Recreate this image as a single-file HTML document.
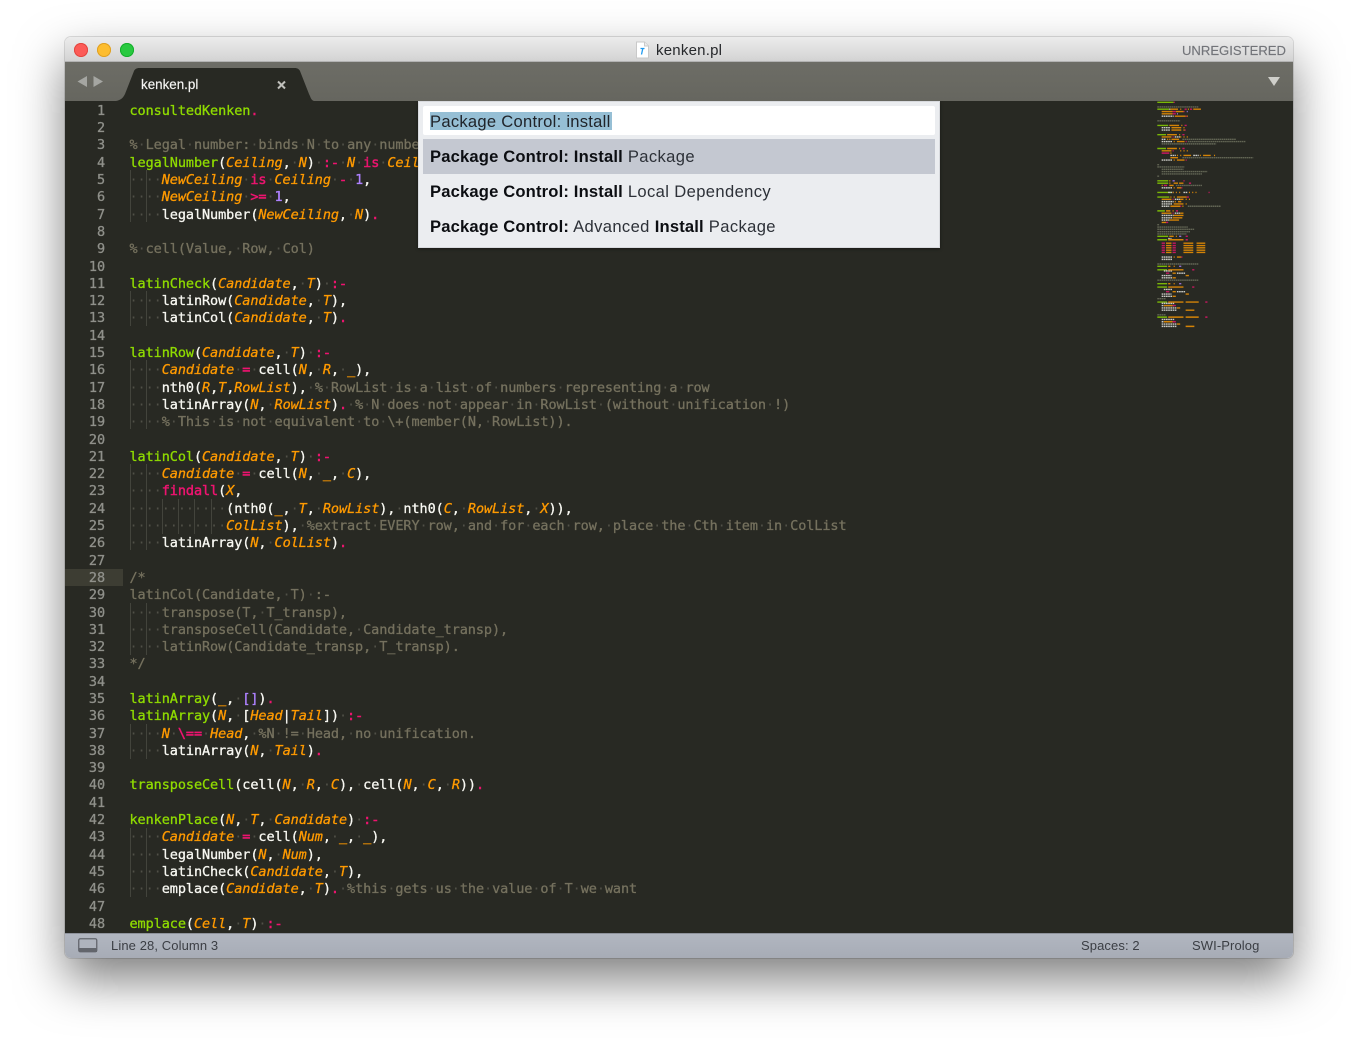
<!DOCTYPE html>
<html lang="en"><head><meta charset="utf-8"><title>kenken.pl</title>
<style>
html,body{margin:0;padding:0;background:#fff;width:1358px;height:1050px;overflow:hidden}
#win{position:absolute;left:65px;top:37px;width:1228px;height:921px;border-radius:6px;overflow:hidden;box-shadow:0 22px 48px rgba(0,0,0,.5),0 0 0 1px rgba(0,0,0,.12)}
.abs,#title,#tabs,#ed,#status{position:absolute}
#title{left:0;top:0;width:1228px;height:25px;background:linear-gradient(#ececec,#d3d3d3);border-bottom:1px solid #b3b3b3;box-sizing:border-box}
#tabs{left:0;top:25px;width:1228px;height:39px;background:linear-gradient(#6d6d66,#66665f)}
#ed{left:0;top:64px;width:1228px;height:832px;background:#282923;overflow:hidden}
#status{left:0;top:896px;width:1228px;height:25px;background:linear-gradient(#b1b6c0,#a7acb6);border-top:1px solid #8e929b;box-sizing:border-box;font:13px "Liberation Sans",sans-serif;letter-spacing:.1px;color:#3b3e44;line-height:24px}
.light{position:absolute;top:5.500px;width:14px;height:14px;border-radius:50%}
#code,#nums{position:absolute;top:1.9px;font:13.5px/17.3px "DejaVu Sans Mono","Liberation Mono",monospace;letter-spacing:-.073px;-webkit-text-stroke:.3px}
#code div,#nums div{height:17.3px;white-space:pre}
#nums{left:0;width:40px;text-align:right;color:#8f908a}
#code{left:64.5px;color:#f8f8f2}
a{color:#8fdb00}em{color:#ff9a00;font-style:italic}s{color:#ee1470;text-decoration:none;-webkit-text-stroke:.45px}
u{color:#505047;text-decoration:none;font-style:normal;-webkit-text-stroke:0}
.c{color:#75715e}.n{color:#ae81ff}
.g{position:absolute;width:1px;background:#43443c}
#pal{position:absolute;left:353px;top:0;width:522px;height:147px;box-sizing:border-box;background:#ebedf0;box-shadow:inset 0 0 0 1px #d8dade,0 1px 3px rgba(0,0,0,.4);font:16.6px "Liberation Sans",sans-serif;letter-spacing:.36px;color:#2d3138}
#pal .inp{position:absolute;left:5px;top:5px;width:512px;height:29px;background:#fff;border-radius:2px}
#pal .sel{position:absolute;left:7px;top:6px;height:18px;line-height:19px;background:#96bfd5;padding:0 1px 0 0;color:#20242a;white-space:pre;letter-spacing:.26px}
#pal .it{position:absolute;left:5px;width:512px;height:35px;line-height:35px;padding-left:7px;box-sizing:border-box;white-space:pre}
#pal b{color:#0c0e12;letter-spacing:.16px}
</style></head>
<body>
<div id="win">
 <div id="title">
  <div class="light" style="left:9px;background:#fc5b57;box-shadow:inset 0 0 0 1px #e2463f"></div>
  <div class="light" style="left:32px;background:#fdbd2f;box-shadow:inset 0 0 0 1px #dfa023"></div>
  <div class="light" style="left:55px;background:#29c940;box-shadow:inset 0 0 0 1px #14ae2b"></div>
  <svg class="abs" style="left:570px;top:4px" width="15" height="18" viewBox="0 0 15 18"><path d="M1.500 1h8l4 4v12h-12z" fill="#fff" stroke="#c9c9c9"/><path d="M9.500 1v4h4" fill="#ececec" stroke="#c9c9c9"/><path d="M5.500 7.500h4M7.800 7.500l-1.300 6" fill="none" stroke="#1e9af0" stroke-width="1.300"/></svg>
  <div class="abs" style="left:591px;top:4.500px;font:15px/18px 'Liberation Sans',sans-serif;letter-spacing:.22px;color:#26282b">kenken.pl</div>
  <div class="abs" style="right:7px;top:4.500px;font:13.1px/18px 'Liberation Sans',sans-serif;color:#73757a;-webkit-text-stroke:.15px">UNREGISTERED</div>
 </div>
 <div id="tabs">
  <svg class="abs" style="left:0;top:0" width="1228" height="39" viewBox="0 0 1228 39">
   <path d="M22 14l-9.500 5.500 9.500 5.500zM28.500 14l9.500 5.500-9.500 5.500z" fill="#a5a6a2"/>
   <path d="M51 39C56 38 58 36 60 32L69 9C70 7 72 6 74 6H230C232 6 234 7 235 9L244 32C246 36 246 38 249 39z" fill="#282923"/>
   <path d="M1203 15h12l-6 9z" fill="#cfcfca"/>
   <path d="M213 19.500l7 7M220 19.500l-7 7" stroke="#c0c0bb" stroke-width="2"/>
  </svg>
  <div class="abs" style="left:76px;top:14px;font:13.4px/18px 'Liberation Sans',sans-serif;color:#f6f6f4;-webkit-text-stroke:.15px">kenken.pl</div>
 </div>
 <div id="ed">
  <div class="abs" style="left:0;top:467.500px;width:58px;height:17.300px;background:#3d3d33"></div>
  <div class="g" style="left:65px;top:69px;height:52px"></div><div class="g" style="left:81px;top:69px;height:52px"></div>
  <div class="g" style="left:65px;top:190px;height:35px"></div><div class="g" style="left:81px;top:190px;height:35px"></div>
  <div class="g" style="left:65px;top:259px;height:69px"></div><div class="g" style="left:81px;top:259px;height:69px"></div>
  <div class="g" style="left:65px;top:363px;height:86px"></div><div class="g" style="left:81px;top:363px;height:86px"></div>
  <div class="g" style="left:97px;top:398px;height:35px"></div><div class="g" style="left:113px;top:398px;height:35px"></div><div class="g" style="left:129px;top:398px;height:35px"></div><div class="g" style="left:146px;top:398px;height:35px"></div>
  <div class="g" style="left:65px;top:502px;height:52px"></div><div class="g" style="left:81px;top:502px;height:52px"></div>
  <div class="g" style="left:65px;top:623px;height:35px"></div><div class="g" style="left:81px;top:623px;height:35px"></div>
  <div class="g" style="left:65px;top:727px;height:69px"></div><div class="g" style="left:81px;top:727px;height:69px"></div>
  <div id="nums"><div>1</div><div>2</div><div>3</div><div>4</div><div>5</div><div>6</div><div>7</div><div>8</div><div>9</div><div>10</div><div>11</div><div>12</div><div>13</div><div>14</div><div>15</div><div>16</div><div>17</div><div>18</div><div>19</div><div>20</div><div>21</div><div>22</div><div>23</div><div>24</div><div>25</div><div>26</div><div>27</div><div>28</div><div>29</div><div>30</div><div>31</div><div>32</div><div>33</div><div>34</div><div>35</div><div>36</div><div>37</div><div>38</div><div>39</div><div>40</div><div>41</div><div>42</div><div>43</div><div>44</div><div>45</div><div>46</div><div>47</div><div>48</div></div>
  <div id="code">
<div><a>consultedKenken</a><s>.</s></div>
<div></div>
<div class="c">%<u>·</u>Legal<u>·</u>number:<u>·</u>binds<u>·</u>N<u>·</u>to<u>·</u>any<u>·</u>number</div>
<div><a>legalNumber</a>(<em>Ceiling</em>,<u>·</u><em>N</em>)<u>·</u><s>:-</s><u>·</u><em>N</em><u>·</u><s>is</s><u>·</u><em>Ceiling</em></div>
<div><u>····</u><em>NewCeiling</em><u>·</u><s>is</s><u>·</u><em>Ceiling</em><u>·</u><s>-</s><u>·</u><span class="n">1</span>,</div>
<div><u>····</u><em>NewCeiling</em><u>·</u><s>&gt;=</s><u>·</u><span class="n">1</span>,</div>
<div><u>····</u>legalNumber(<em>NewCeiling</em>,<u>·</u><em>N</em>)<s>.</s></div>
<div></div>
<div class="c">%<u>·</u>cell(Value,<u>·</u>Row,<u>·</u>Col)</div>
<div></div>
<div><a>latinCheck</a>(<em>Candidate</em>,<u>·</u><em>T</em>)<u>·</u><s>:-</s></div>
<div><u>····</u>latinRow(<em>Candidate</em>,<u>·</u><em>T</em>),</div>
<div><u>····</u>latinCol(<em>Candidate</em>,<u>·</u><em>T</em>)<s>.</s></div>
<div></div>
<div><a>latinRow</a>(<em>Candidate</em>,<u>·</u><em>T</em>)<u>·</u><s>:-</s></div>
<div><u>····</u><em>Candidate</em><u>·</u><s>=</s><u>·</u>cell(<em>N</em>,<u>·</u><em>R</em>,<u>·</u><em>_</em>),</div>
<div><u>····</u>nth0(<em>R</em>,<em>T</em>,<em>RowList</em>),<u>·</u><span class="c">%<u>·</u>RowList<u>·</u>is<u>·</u>a<u>·</u>list<u>·</u>of<u>·</u>numbers<u>·</u>representing<u>·</u>a<u>·</u>row</span></div>
<div><u>····</u>latinArray(<em>N</em>,<u>·</u><em>RowList</em>)<s>.</s><u>·</u><span class="c">%<u>·</u>N<u>·</u>does<u>·</u>not<u>·</u>appear<u>·</u>in<u>·</u>RowList<u>·</u>(without<u>·</u>unification<u>·</u>!)</span></div>
<div><u>····</u><span class="c">%<u>·</u>This<u>·</u>is<u>·</u>not<u>·</u>equivalent<u>·</u>to<u>·</u>\+(member(N,<u>·</u>RowList)).</span></div>
<div></div>
<div><a>latinCol</a>(<em>Candidate</em>,<u>·</u><em>T</em>)<u>·</u><s>:-</s></div>
<div><u>····</u><em>Candidate</em><u>·</u><s>=</s><u>·</u>cell(<em>N</em>,<u>·</u><em>_</em>,<u>·</u><em>C</em>),</div>
<div><u>····</u><s>findall</s>(<em>X</em>,</div>
<div><u>············</u>(nth0(<em>_</em>,<u>·</u><em>T</em>,<u>·</u><em>RowList</em>),<u>·</u>nth0(<em>C</em>,<u>·</u><em>RowList</em>,<u>·</u><em>X</em>)),</div>
<div><u>············</u><em>ColList</em>),<u>·</u><span class="c">%extract<u>·</u>EVERY<u>·</u>row,<u>·</u>and<u>·</u>for<u>·</u>each<u>·</u>row,<u>·</u>place<u>·</u>the<u>·</u>Cth<u>·</u>item<u>·</u>in<u>·</u>ColList</span></div>
<div><u>····</u>latinArray(<em>N</em>,<u>·</u><em>ColList</em>)<s>.</s></div>
<div></div>
<div class="c">/*</div>
<div class="c">latinCol(Candidate,<u>·</u>T)<u>·</u>:-</div>
<div class="c"><u>····</u>transpose(T,<u>·</u>T_transp),</div>
<div class="c"><u>····</u>transposeCell(Candidate,<u>·</u>Candidate_transp),</div>
<div class="c"><u>····</u>latinRow(Candidate_transp,<u>·</u>T_transp).</div>
<div class="c">*/</div>
<div></div>
<div><a>latinArray</a>(<em>_</em>,<u>·</u><span class="n">[]</span>)<s>.</s></div>
<div><a>latinArray</a>(<em>N</em>,<u>·</u>[<em>Head</em>|<em>Tail</em>])<u>·</u><s>:-</s></div>
<div><u>····</u><em>N</em><u>·</u><s>\==</s><u>·</u><em>Head</em>,<u>·</u><span class="c">%N<u>·</u>!=<u>·</u>Head,<u>·</u>no<u>·</u>unification.</span></div>
<div><u>····</u>latinArray(<em>N</em>,<u>·</u><em>Tail</em>)<s>.</s></div>
<div></div>
<div><a>transposeCell</a>(cell(<em>N</em>,<u>·</u><em>R</em>,<u>·</u><em>C</em>),<u>·</u>cell(<em>N</em>,<u>·</u><em>C</em>,<u>·</u><em>R</em>))<s>.</s></div>
<div></div>
<div><a>kenkenPlace</a>(<em>N</em>,<u>·</u><em>T</em>,<u>·</u><em>Candidate</em>)<u>·</u><s>:-</s></div>
<div><u>····</u><em>Candidate</em><u>·</u><s>=</s><u>·</u>cell(<em>Num</em>,<u>·</u><em>_</em>,<u>·</u><em>_</em>),</div>
<div><u>····</u>legalNumber(<em>N</em>,<u>·</u><em>Num</em>),</div>
<div><u>····</u>latinCheck(<em>Candidate</em>,<u>·</u><em>T</em>),</div>
<div><u>····</u>emplace(<em>Candidate</em>,<u>·</u><em>T</em>)<s>.</s><u>·</u><span class="c">%this<u>·</u>gets<u>·</u>us<u>·</u>the<u>·</u>value<u>·</u>of<u>·</u>T<u>·</u>we<u>·</u>want</span></div>
<div></div>
<div><a>emplace</a>(<em>Cell</em>,<u>·</u><em>T</em>)<u>·</u><s>:-</s></div>
  </div>
  <svg class="abs" style="left:1092px;top:0;opacity:.8;filter:blur(.3px)" width="110" height="232" viewBox="0 0 110 232" fill="none">
   <g transform="translate(.3,1.300) scale(1.09,2.31)" stroke-width=".6">
    <path stroke="#8a8d76" stroke-dasharray="1.500 .4" opacity=".75" d="M0 2h38M0 8h21M23 16h49M28 17h53M4 18h50M23 24h65M0 27h2M0 28h25M4 29h20M4 30h42M4 31h37M0 32h2M17 36h24M28 45h30M0 53h2M0 54h28M0 55h34M0 56h30M0 57h27M0 70h38M0 77h38M0 85h8M0 92h8"/>
    <path stroke="#8fdb00" d="M0 0h15M0 3h11M0 10h10M0 14h8M0 20h8M0 34h10M0 35h10M0 39h13M0 41h11M0 47h7M0 58h10M0 59.500h9M0 71h9M0 72.500h9M0 78.500h9M0 80h9M0 86.500h9M0 93h9"/>
    <path stroke="#f4f4ee" stroke-dasharray="1.500 .5" d="M11 3h1M4 6h11M4 11h8M4 12h8M16 15h5M4 16h4M4 17h10M4 25h10M12 23h5M33 23h5M4 37h10M10 39h5M24 39h4M16 42h5M4 43h11M4 44h10M4 45h7M4 48h4M16 48h5M4 49h11M4 50h10M4 51h7M10 59h3M4 67h10M4 68h10M6 73h8M18 74h8M4 75h9M4 76h10M6 81h8M18 82h8M4 83h9M4 84h10M4 87h12M4 88h12M4 89h14M4 90h14M4 94h12M4 95h12M4 96h14M4 97h14"/>
    <path stroke="#ff9a00" d="M12 3h7M21 3h1M28 3h1M33 3h7M4 4h10M17 4h7M4 5h10M16 6h10M27 6h1M11 10h9M22 10h1M13 11h9M24 11h1M13 12h9M24 12h1M9 14h9M20 14h1M4 15h9M21 15h1M24 15h1M27 15h1M9 16h1M11 16h1M13 16h7M15 17h1M18 17h7M9 20h9M20 20h1M4 21h9M21 21h1M24 21h1M27 21h1M12 22h1M18 23h1M21 23h1M24 23h7M39 23h1M42 23h7M52 23h1M12 24h7M15 25h1M18 25h7M11 34h1M11 35h1M15 35h4M20 35h4M4 36h1M11 36h4M15 37h1M18 37h4M14 39h1M17 39h1M20 39h1M29 39h1M32 39h1M35 39h1M12 41h1M15 41h1M18 41h9M4 42h9M21 42h3M26 42h1M29 42h1M16 43h1M19 43h3M15 44h9M26 44h1M12 45h9M23 45h1M8 47h4M14 47h1M4 48h9M21 48h3M15 49h9M14 50h9M11 51h9M4 52h4M11 58h4M17 58h1M10 59.500h14M8 61h5M8 62h5M8 63h5M8 64h5M8 65h5M24 61h9M24 62h9M24 63h9M24 64h9M24 65h9M36 61h8M36 62h8M36 63h8M36 64h8M36 65h8M15 67h1M18 67h4M10 71h2M15 71h1M10 72.500h14M14 74h3M26 75h3M14 76h3M10 78.500h2M15 78.500h1M10 80h14M14 82h3M26 83h3M14 84h3M10 86.500h14M26 86.500h12M6 88h8M18 89h3M26 90h8M10 93h14M26 93h12M6 95h8M18 96h3M26 97h8"/>
    <path stroke="#ee1470" d="M15 0h1M25 3h2M30 3h2M14 4h3M24 4h1M14 5h3M26 6h1M25 10h2M25 12h1M23 14h2M14 15h1M26 17h1M23 20h2M14 21h1M4 22h7M26 25h1M24 34h1M29 35h2M6 36h3M22 37h1M47 39h1M27 41h2M14 42h1M21 45h1M17 47h2M14 48h1M8 52h2M26 58h2M26 59.500h2M4 61h3M4 62h3M4 63h3M4 64h3M4 65h3M14 61h3M14 62h3M14 63h3M14 64h3M14 65h3M22 67h1M32 72.500h2M8 74h3M32 80h2M8 82h3M44 86.500h2M14 88h3M44 93h2M14 95h3"/>
    <path stroke="#ae81ff" d="M27 4h1M18 5h1M14 34h2M20 58h2M20 71h2M20 78.500h2"/>
   </g>
  </svg>
  <div id="pal">
   <div class="inp"><div class="sel">Package Control: install</div></div>
   <div class="it" style="top:38px;background:#c4c8d1;line-height:36px"><b>Package Control: Install</b> Package</div>
   <div class="it" style="top:73px"><b>Package Control: Install</b> Local Dependency</div>
   <div class="it" style="top:108px"><b>Package Control:</b> Advanced <b>Install</b> Package</div>
  </div>
 </div>
 <div id="status">
  <svg class="abs" style="left:13px;top:4px" width="20" height="15" viewBox="0 0 20 15"><rect x=".75" y=".75" width="18" height="13" rx="1.500" fill="#aeb3bd" stroke="#62656c" stroke-width="1.300"/><rect x="1" y="10" width="18" height="4" fill="#62656c"/></svg>
  <div class="abs" style="left:46px;top:0">Line 28, Column 3</div>
  <div class="abs" style="left:1016px;top:0">Spaces: 2</div>
  <div class="abs" style="left:1127px;top:0">SWI-Prolog</div>
 </div>
</div>
</body></html>
